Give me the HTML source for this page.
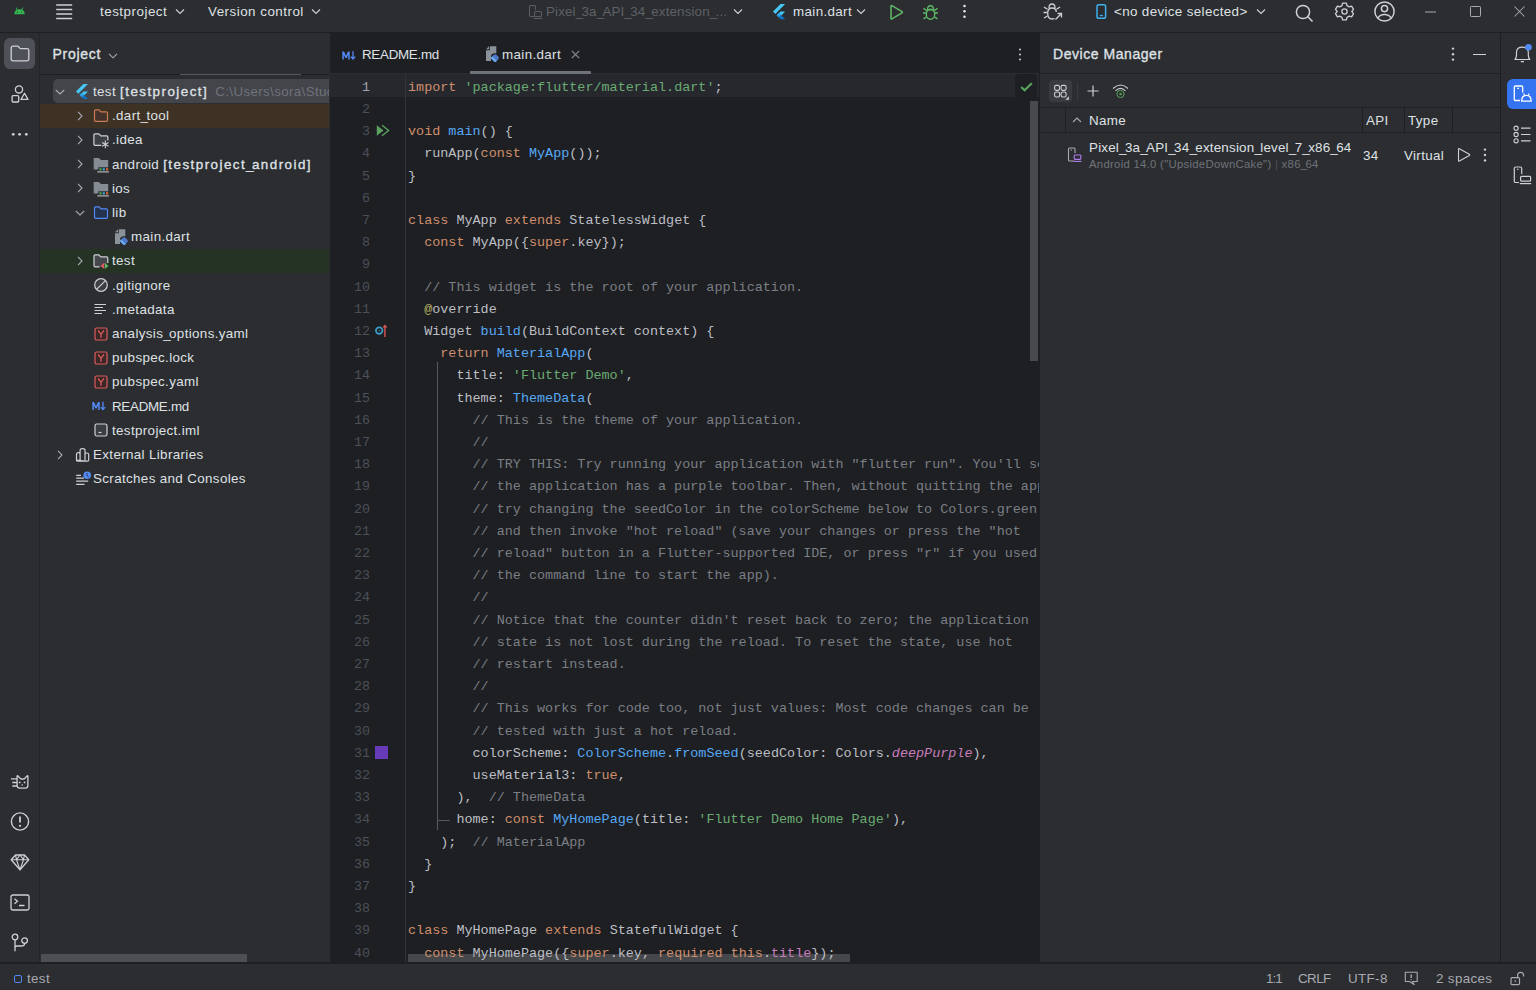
<!DOCTYPE html>
<html><head><meta charset="utf-8">
<style>
*{margin:0;padding:0;box-sizing:border-box}
html,body{width:1536px;height:990px;overflow:hidden;background:#2B2D30;font-family:"Liberation Sans",sans-serif;color:#DFE1E5}
.a{position:absolute}
.ui{font-size:13.4px;letter-spacing:0.35px;white-space:nowrap;line-height:18px}
.u{letter-spacing:-1.6px}
b{font-weight:normal;-webkit-text-stroke:0.35px #DFE1E5;letter-spacing:1.45px}
svg{position:absolute;overflow:visible}
#top{left:0;top:0;width:1536px;height:32px;background:#2B2D30}
#topline{left:0;top:32px;width:1536px;height:1px;background:#1E1F22}
#lstrip{left:0;top:33px;width:39px;height:929px;background:#2B2D30}
#lstripb{left:39px;top:33px;width:1px;height:929px;background:#242528;box-shadow:1px 0 0 #28292D}
#proj{left:40px;top:33px;width:290px;height:929px;background:#2B2D30;overflow:hidden}
#editor{left:330px;top:33px;width:710px;height:929px;background:#1E1F22;overflow:hidden}
#dm{left:1040px;top:33px;width:460px;height:929px;background:#2B2D30;overflow:hidden}
#rstrip{left:1500px;top:33px;width:36px;height:929px;background:#2B2D30}
#rstripb{left:1500px;top:33px;width:1px;height:929px;background:#1E1F22}
#status{left:0;top:962px;width:1536px;height:28px;background:#2B2D30}
#statusb{left:0;top:962px;width:1536px;height:2px;background:#1E1F22}
.code{font-family:"Liberation Mono",monospace;font-size:13.44px;white-space:pre;line-height:22.2px}
.ln{font-family:"Liberation Mono",monospace;font-size:13.333px;color:#4B5059;text-align:right;width:40px;line-height:22.2px}
.k{color:#CF8E6D}.s{color:#6AAB73}.c{color:#7A7E85}.f{color:#56A8F5}.an{color:#B3AE60}.p{color:#C77DBB}.t{color:#BCBEC4}
</style></head><body>
<div id="top" class="a"></div>
<div id="topline" class="a"></div>
<div id="lstrip" class="a"></div>
<div id="lstripb" class="a"></div>
<div id="proj" class="a"></div>
<div id="editor" class="a"></div>
<div id="dm" class="a"></div>
<div id="rstrip" class="a"></div>
<div id="rstripb" class="a"></div>
<div id="status" class="a"></div>
<div id="statusb" class="a"></div>

<!-- TOP BAR -->
<svg style="left:14px;top:7px" width="11" height="8" viewBox="0 0 11 8"><path d="M0.3 7.3Q0.3 2.3 5.5 2.3Q10.7 2.3 10.7 7.3Z" fill="#33B552"/><path d="M2.2 0.5L3.1 2.8M8.8 0.5L7.9 2.8" stroke="#33B552" stroke-width="1"/><circle cx="3.3" cy="5" r="0.55" fill="#2B2D30"/><circle cx="7.7" cy="5" r="0.55" fill="#2B2D30"/></svg>
<svg style="left:56px;top:4px" width="17" height="16" viewBox="0 0 17 16"><path d="M0.2 1H16.2M0.2 5.5H16.2M0.2 10H16.2M0.2 14.5H16.2" stroke="#CED0D6" stroke-width="1.3"/></svg>
<div class="a ui" style="left:100px;top:3px;letter-spacing:0.5px">testproject</div>
<svg style="left:175px;top:9px" width="10" height="6" viewBox="0 0 10 6"><path d="M1 0.5L5 4.5L9 0.5" stroke="#CED0D6" stroke-width="1.1" fill="none"/></svg>
<div class="a ui" style="left:208px;top:3px;letter-spacing:0.48px">Version control</div>
<svg style="left:311px;top:9px" width="10" height="6" viewBox="0 0 10 6"><path d="M1 0.5L5 4.5L9 0.5" stroke="#CED0D6" stroke-width="1.1" fill="none"/></svg>
<svg style="left:528px;top:4px" width="16" height="16" viewBox="0 0 16 16"><path d="M7.5 12.5H2.5Q1.5 12.5 1.5 11.5V2.5Q1.5 1.5 2.5 1.5H6.5Q7.5 1.5 7.5 2.5V6" stroke="#5A5D63" stroke-width="1.1" fill="none"/><rect x="6.5" y="7.5" width="7" height="5" rx="1" stroke="#5A5D63" stroke-width="1.1" fill="none"/><path d="M5.5 14.5H14.5" stroke="#5A5D63" stroke-width="1.1"/></svg>
<div class="a ui" style="left:546px;top:3px;color:#5E6167;letter-spacing:0.12px">Pixel<span class="u">_</span>3a<span class="u">_</span>API<span class="u">_</span>34<span class="u">_</span>extension<span class="u">_</span>...</div>
<svg style="left:733px;top:9px" width="10" height="6" viewBox="0 0 10 6"><path d="M1 0.5L5 4.5L9 0.5" stroke="#CED0D6" stroke-width="1.1" fill="none"/></svg>
<svg style="left:773px;top:3.5px" width="12.2" height="15.2" viewBox="9.8 10.4 146.4 181.2"><path fill="#48C6F5" d="M37.7 128.9L9.8 101 100.4 10.4h55.8z"/><path fill="#48C6F5" d="M156.2 101H100.4L79.5 121.9l27.9 27.9z"/><path fill="#1172C4" d="M79.6 170.7l20.9 20.9h55.8l-48.8-48.8z"/><path fill="#2AA4EC" d="M51.6 142.8l27.9-27.9 27.9 27.9-27.9 27.9z"/></svg>
<div class="a ui" style="left:793px;top:3px">main.dart</div>
<svg style="left:856px;top:9px" width="10" height="6" viewBox="0 0 10 6"><path d="M1 0.5L5 4.5L9 0.5" stroke="#CED0D6" stroke-width="1.1" fill="none"/></svg>
<svg style="left:889px;top:4px" width="15" height="17" viewBox="0 0 15 17"><path d="M2 2.2Q2 1.2 2.9 1.7L13 7.7Q13.8 8.3 13 8.9L2.9 14.9Q2 15.4 2 14.4Z" stroke="#5FB865" stroke-width="1.5" fill="none" stroke-linejoin="round"/></svg>
<svg style="left:922px;top:4px" width="17" height="17" viewBox="0 0 17 17"><ellipse cx="8.5" cy="10.3" rx="4.2" ry="5" stroke="#5FB865" stroke-width="1.4" fill="none"/><path d="M5.5 5.8Q5.5 1.8 8.5 1.8Q11.5 1.8 11.5 5.8Z" stroke="#5FB865" stroke-width="1.4" fill="none"/><path d="M1 9H4.5M12.5 9H16M1.5 4.2L4.6 6.6M15.5 4.2L12.4 6.6M1.5 14.8L4.7 12.8M15.5 14.8L12.3 12.8" stroke="#5FB865" stroke-width="1.4"/></svg>
<svg style="left:962px;top:4px" width="5" height="16" viewBox="0 0 5 16"><circle cx="2.5" cy="2" r="1.3" fill="#DFE1E5"/><circle cx="2.5" cy="7.3" r="1.3" fill="#DFE1E5"/><circle cx="2.5" cy="12.7" r="1.3" fill="#DFE1E5"/></svg>
<svg style="left:1043px;top:2px" width="20" height="19" viewBox="0 0 20 19"><path d="M6 6Q6 2 9 2Q12 2 12 6" stroke="#CED0D6" stroke-width="1.3" fill="none"/><path d="M11.5 16.5Q10.5 17 9 17Q4.7 17 4.7 11.2Q4.7 6 9 6Q13.3 6 13.3 10" stroke="#CED0D6" stroke-width="1.3" fill="none"/><path d="M0.5 10.5H4M1 5L4.5 7.3M1 16L4.5 14M13.5 7.3L17 5" stroke="#CED0D6" stroke-width="1.3"/><path d="M12.5 17.5L18.5 11.5M14.5 11.5H18.5V15.5" stroke="#CED0D6" stroke-width="1.3" fill="none"/></svg>
<svg style="left:1096px;top:4px" width="11" height="15" viewBox="0 0 11 15"><rect x="1" y="0.8" width="8.6" height="13.4" rx="1.8" stroke="#3DB0F0" stroke-width="1.5" fill="none"/><path d="M3.8 11.5H6.8" stroke="#3DB0F0" stroke-width="1.3"/></svg>
<div class="a ui" style="left:1114px;top:3px">&lt;no device selected&gt;</div>
<svg style="left:1256px;top:9px" width="10" height="6" viewBox="0 0 10 6"><path d="M1 0.5L5 4.5L9 0.5" stroke="#CED0D6" stroke-width="1.1" fill="none"/></svg>
<svg style="left:1295px;top:4px" width="19" height="19" viewBox="0 0 19 19"><circle cx="8" cy="8" r="6.6" stroke="#CED0D6" stroke-width="1.5" fill="none"/><path d="M12.8 12.8L17.5 17.5" stroke="#CED0D6" stroke-width="1.6"/></svg>
<svg style="left:1335px;top:2px" width="19" height="19" viewBox="0 0 19 19"><path d="M7.6 1.2H11.4L12 3.6L14.3 4.9L16.6 4.2L18.5 7.4L16.8 9.5L16.8 9.5L18.5 11.6L16.6 14.8L14.3 14.1L12 15.4L11.4 17.8H7.6L7 15.4L4.7 14.1L2.4 14.8L0.5 11.6L2.2 9.5L0.5 7.4L2.4 4.2L4.7 4.9L7 3.6Z" stroke="#CED0D6" stroke-width="1.3" fill="none" stroke-linejoin="round"/><circle cx="9.5" cy="9.5" r="2.6" stroke="#CED0D6" stroke-width="1.3" fill="none"/></svg>
<svg style="left:1374px;top:1px" width="21" height="21" viewBox="0 0 21 21"><circle cx="10.5" cy="10.5" r="9.6" stroke="#CED0D6" stroke-width="1.5" fill="none"/><circle cx="10.5" cy="7.6" r="3.1" stroke="#CED0D6" stroke-width="1.5" fill="none"/><path d="M3.8 17.2Q6 13.6 10.5 13.6Q15 13.6 17.2 17.2" stroke="#CED0D6" stroke-width="1.5" fill="none"/></svg>
<svg style="left:1425px;top:11px" width="11" height="2" viewBox="0 0 11 2"><path d="M0 1H11" stroke="#A8AAB0" stroke-width="1"/></svg>
<svg style="left:1470px;top:6px" width="11" height="11" viewBox="0 0 11 11"><rect x="0.5" y="0.5" width="10" height="10" rx="0.8" stroke="#A8AAB0" stroke-width="1" fill="none"/></svg>
<svg style="left:1514px;top:6px" width="11" height="11" viewBox="0 0 11 11"><path d="M0.5 0.5L10.5 10.5M10.5 0.5L0.5 10.5" stroke="#A8AAB0" stroke-width="1.05"/></svg>
<!-- LSTRIP -->
<div class="a" style="left:4px;top:38px;width:31px;height:31px;background:#4E5157;border-radius:6px"></div>
<svg style="left:10px;top:45px" width="20" height="17" viewBox="0 0 20 17"><path d="M1.2 3Q1.2 1.2 3 1.2H8L10.3 3.6H17Q18.8 3.6 18.8 5.4V14Q18.8 15.8 17 15.8H3Q1.2 15.8 1.2 14Z" stroke="#CED0D6" stroke-width="1.3" fill="none" stroke-linejoin="round"/></svg>
<svg style="left:11px;top:85px" width="18" height="18" viewBox="0 0 18 18"><circle cx="8" cy="4.4" r="3.6" stroke="#CED0D6" stroke-width="1.3" fill="none"/><rect x="1.1" y="10.6" width="6.6" height="6.4" rx="0.9" stroke="#CED0D6" stroke-width="1.3" fill="none"/><path d="M13.5 8.2L17 14.4H10Z" stroke="#CED0D6" stroke-width="1.3" fill="none" stroke-linejoin="round"/></svg>
<svg style="left:11px;top:132px" width="18" height="5" viewBox="0 0 18 5"><circle cx="2.2" cy="2.3" r="1.4" fill="#CED0D6"/><circle cx="8.6" cy="2.3" r="1.4" fill="#CED0D6"/><circle cx="15.3" cy="2.3" r="1.4" fill="#CED0D6"/></svg>
<svg style="left:10px;top:774px" width="20" height="16" viewBox="0 0 20 16"><path d="M7.1 2.2Q7.2 1.3 7.9 1.9L10.6 4.7Q12.5 5.6 14.4 4.7L17.1 1.9Q17.8 1.3 17.9 2.2V11.3Q17.9 14.2 15.2 14.2H9.8Q7.1 14.2 7.1 11.3Z" stroke="#CED0D6" stroke-width="1.3" fill="none" stroke-linejoin="round"/><path d="M1 4.9H7M2.3 8.5H7M2.3 12H7" stroke="#CED0D6" stroke-width="1.3"/><circle cx="9.7" cy="8.4" r="0.95" fill="#CED0D6"/><circle cx="14.6" cy="8.4" r="0.95" fill="#CED0D6"/><path d="M11.1 10.5H13.3L12.2 11.9Z" fill="#CED0D6"/></svg>
<svg style="left:10px;top:812px" width="20" height="20" viewBox="0 0 20 20"><circle cx="10" cy="9.5" r="8.6" stroke="#CED0D6" stroke-width="1.4" fill="none"/><path d="M10 4.5V10.5" stroke="#CED0D6" stroke-width="1.8"/><circle cx="10" cy="13.8" r="1.1" fill="#CED0D6"/></svg>
<svg style="left:10px;top:854px" width="20" height="17" viewBox="0 0 20 17"><path d="M5.5 1H14.5L18.8 5.7L10 15.8L1.2 5.7Z" stroke="#CED0D6" stroke-width="1.3" fill="none" stroke-linejoin="round"/><path d="M1.2 5.7H18.8M6.5 5.7L10 15.8L13.5 5.7M5.5 1L6.5 5.7L10 1L13.5 5.7L14.5 1" stroke="#CED0D6" stroke-width="1.1" fill="none" stroke-linejoin="round"/></svg>
<svg style="left:10px;top:894px" width="20" height="17" viewBox="0 0 20 17"><rect x="1" y="1" width="18" height="15" rx="1.8" stroke="#CED0D6" stroke-width="1.3" fill="none"/><path d="M4.5 4.8L7.5 7.3L4.5 9.8M9 11.5H14.5" stroke="#CED0D6" stroke-width="1.3" fill="none"/></svg>
<svg style="left:11px;top:933px" width="18" height="19" viewBox="0 0 18 19"><circle cx="4" cy="4" r="2.8" stroke="#CED0D6" stroke-width="1.3" fill="none"/><circle cx="13.6" cy="7.6" r="2.8" stroke="#CED0D6" stroke-width="1.3" fill="none"/><path d="M4 6.8V18.2M4 15Q4 13 6 13H10Q13.6 13 13.6 10.4" stroke="#CED0D6" stroke-width="1.3" fill="none"/></svg>
<div class="a" style="left:0;top:0;width:329px;height:962px;overflow:hidden">
<!-- PROJECT -->
<div class="a ui" style="left:52.5px;top:44.5px;font-size:14px;-webkit-text-stroke:0.35px #DFE1E5;letter-spacing:0.7px">Project</div>
<svg style="left:108px;top:52.6px" width="10" height="6" viewBox="0 0 10 6"><path d="M1 0.8L5 4.8L9 0.8" stroke="#A8AAB0" stroke-width="1.1" fill="none"/></svg>
<div class="a" style="left:40px;top:74px;width:290px;height:1px;background:#1E1F22"></div>
<div class="a" style="left:180px;top:74px;width:121px;height:1px;background:#55575C"></div>
<div class="a" style="left:53px;top:79px;width:290px;height:24px;background:#43454A;border-radius:5px"></div>
<div class="a" style="left:40px;top:103.6px;width:290px;height:24.2px;background:#3D3223"></div>
<div class="a" style="left:40px;top:248.8px;width:290px;height:24.2px;background:#253325"></div>
<svg style="left:55px;top:88.6px" width="10" height="6" viewBox="0 0 10 6"><path d="M0.8 1L5 5L9.2 1" stroke="#A8AAB0" stroke-width="1.1" fill="none"/></svg>
<svg style="left:76px;top:84.1px" width="12" height="15" viewBox="9.8 10.4 146.4 181.2"><path fill="#48C6F5" d="M37.7 128.9L9.8 101 100.4 10.4h55.8z"/><path fill="#48C6F5" d="M156.2 101H100.4L79.5 121.9l27.9 27.9z"/><path fill="#1172C4" d="M79.6 170.7l20.9 20.9h55.8l-48.8-48.8z"/><path fill="#2AA4EC" d="M51.6 142.8l27.9-27.9 27.9 27.9-27.9 27.9z"/></svg>
<div class="a ui" style="left:93px;top:83.0px;">test <b>[testproject]</b> <span style="color:#6F737A;margin-left:3px">C:\Users\sora\StudioProjects\testproject</span></div>
<svg style="left:77px;top:110.8px" width="6" height="10" viewBox="0 0 6 10"><path d="M1 0.8L5 5L1 9.2" stroke="#A8AAB0" stroke-width="1.1" fill="none"/></svg>
<svg style="left:93px;top:107.8px" width="16" height="16" viewBox="0 0 16 16"><path d="M1.5 3Q1.5 1.8 2.7 1.8H6L8 3.8H13.3Q14.5 3.8 14.5 5V12.2Q14.5 13.4 13.3 13.4H2.7Q1.5 13.4 1.5 12.2Z" stroke="#C77D55" stroke-width="1.2" fill="#45322A"/></svg>
<div class="a ui" style="left:112px;top:107.2px;">.dart<span class="u">_</span>tool</div>
<svg style="left:77px;top:135.0px" width="6" height="10" viewBox="0 0 6 10"><path d="M1 0.8L5 5L1 9.2" stroke="#A8AAB0" stroke-width="1.1" fill="none"/></svg>
<svg style="left:93px;top:132.0px" width="16" height="16" viewBox="0 0 16 16"><path d="M8.3 13.3H2.1Q0.9 13.3 0.9 12.1V3.1Q0.9 1.9 2.1 1.9H5.9L7.9 3.9H13.7Q14.9 3.9 14.9 5.1V8.6" stroke="#CED0D6" stroke-width="1.2" fill="#3C3F43"/><path d="M12.3 8.6V16.2M9.1 10.6L15.5 14.2M9.1 14.2L15.5 10.6" stroke="#CED0D6" stroke-width="1.1"/></svg>
<div class="a ui" style="left:112px;top:131.4px;">.idea</div>
<svg style="left:77px;top:159.2px" width="6" height="10" viewBox="0 0 6 10"><path d="M1 0.8L5 5L1 9.2" stroke="#A8AAB0" stroke-width="1.1" fill="none"/></svg>
<svg style="left:93px;top:156.2px" width="16" height="16" viewBox="0 0 16 16"><path d="M0.7 2.1H5.9L7.9 4H15.2V11.3H5.3V13.4H0.7Z" fill="#868C94"/><rect x="6.4" y="12.3" width="2.2" height="2.1" fill="#4BAF4F"/><rect x="9.7" y="12.3" width="2.2" height="2.1" fill="#3DA8D8"/><rect x="13" y="12.3" width="2.2" height="2.1" fill="#E56A2C"/><path d="M4.3 15.9H16" stroke="#CED0D6" stroke-width="1"/></svg>
<div class="a ui" style="left:112px;top:155.6px;">android <b>[testproject<span class="u">_</span>android]</b></div>
<svg style="left:77px;top:183.4px" width="6" height="10" viewBox="0 0 6 10"><path d="M1 0.8L5 5L1 9.2" stroke="#A8AAB0" stroke-width="1.1" fill="none"/></svg>
<svg style="left:93px;top:180.4px" width="16" height="16" viewBox="0 0 16 16"><path d="M0.7 2.1H5.9L7.9 4H15.2V11.3H5.3V13.4H0.7Z" fill="#868C94"/><rect x="6.4" y="12.3" width="2.2" height="2.1" fill="#4BAF4F"/><rect x="9.7" y="12.3" width="2.2" height="2.1" fill="#3DA8D8"/><rect x="13" y="12.3" width="2.2" height="2.1" fill="#E56A2C"/><path d="M4.3 15.9H16" stroke="#CED0D6" stroke-width="1"/></svg>
<div class="a ui" style="left:112px;top:179.8px;">ios</div>
<svg style="left:75px;top:209.6px" width="10" height="6" viewBox="0 0 10 6"><path d="M0.8 1L5 5L9.2 1" stroke="#A8AAB0" stroke-width="1.1" fill="none"/></svg>
<svg style="left:93px;top:204.6px" width="16" height="16" viewBox="0 0 16 16"><path d="M1.5 3Q1.5 1.8 2.7 1.8H6L8 3.8H13.3Q14.5 3.8 14.5 5V12.2Q14.5 13.4 13.3 13.4H2.7Q1.5 13.4 1.5 12.2Z" stroke="#548AF7" stroke-width="1.2" fill="#25324D"/></svg>
<div class="a ui" style="left:112px;top:204.0px;">lib</div>
<svg style="left:113px;top:228.8px" width="16" height="16" viewBox="0 0 16 16"><path d="M5.8 0.3H12.3V7.2H10.6Q7 7.2 7 10.8V15.1H2V4.3H5.8Z" fill="#8A9199"/><path d="M2 3.3L5 0.3V3.3Z" fill="#8A9199"/><rect x="8" y="8.8" width="6.3" height="6.3" rx="1.8" transform="rotate(45 11.15 11.95)" fill="#4F78C8"/><path d="M8.2 10.3L12.8 14.9L11.9 15.8Q11.15 16.5 10.4 15.8L7.3 12.7Q6.6 11.95 7.3 11.2Z" fill="#6AAAF0"/></svg>
<div class="a ui" style="left:131px;top:228.2px;">main.dart</div>
<svg style="left:77px;top:256.0px" width="6" height="10" viewBox="0 0 6 10"><path d="M1 0.8L5 5L1 9.2" stroke="#A8AAB0" stroke-width="1.1" fill="none"/></svg>
<svg style="left:93px;top:253.0px" width="16" height="16" viewBox="0 0 16 16"><path d="M6.6 13.9H2.2Q1 13.9 1 12.7V3Q1 1.8 2.2 1.8H5.8L7.8 3.8H13.6Q14.8 3.8 14.8 5V10.1" stroke="#CED0D6" stroke-width="1.2" fill="#45474C"/><path d="M11.2 9.8L7.4 13L11.2 16.1Z" fill="#E55765"/><path d="M11.8 9.8L15.5 13L11.8 16.1Z" fill="#5FB865"/></svg>
<div class="a ui" style="left:112px;top:252.4px;">test</div>
<svg style="left:93px;top:277.2px" width="16" height="16" viewBox="0 0 16 16"><circle cx="8" cy="8" r="6.3" stroke="#CED0D6" stroke-width="1.2" fill="#3C3F41"/><path d="M3.8 12.2L12.2 3.8" stroke="#CED0D6" stroke-width="1.2"/></svg>
<div class="a ui" style="left:112px;top:276.6px;">.gitignore</div>
<svg style="left:93px;top:301.4px" width="16" height="16" viewBox="0 0 16 16"><path d="M1.5 3.5H13M1.5 6.5H10M1.5 9.5H13M1.5 12.5H9" stroke="#CED0D6" stroke-width="1.1"/></svg>
<div class="a ui" style="left:112px;top:300.8px;">.metadata</div>
<svg style="left:93px;top:325.6px" width="16" height="16" viewBox="0 0 16 16"><rect x="2" y="2" width="12" height="12" rx="1.5" stroke="#DB5C5C" stroke-width="1.2" fill="#3A2728"/><path d="M5 4.5L8 8.3L11 4.5M8 8.3V11.8" stroke="#DB5C5C" stroke-width="1.3" fill="none"/></svg>
<div class="a ui" style="left:112px;top:325.0px;">analysis<span class="u">_</span>options.yaml</div>
<svg style="left:93px;top:349.8px" width="16" height="16" viewBox="0 0 16 16"><rect x="2" y="2" width="12" height="12" rx="1.5" stroke="#DB5C5C" stroke-width="1.2" fill="#3A2728"/><path d="M5 4.5L8 8.3L11 4.5M8 8.3V11.8" stroke="#DB5C5C" stroke-width="1.3" fill="none"/></svg>
<div class="a ui" style="left:112px;top:349.2px;">pubspec.lock</div>
<svg style="left:93px;top:374.0px" width="16" height="16" viewBox="0 0 16 16"><rect x="2" y="2" width="12" height="12" rx="1.5" stroke="#DB5C5C" stroke-width="1.2" fill="#3A2728"/><path d="M5 4.5L8 8.3L11 4.5M8 8.3V11.8" stroke="#DB5C5C" stroke-width="1.3" fill="none"/></svg>
<div class="a ui" style="left:112px;top:373.4px;">pubspec.yaml</div>
<svg style="left:92px;top:398.2px" width="16" height="16" viewBox="0 0 16 16"><path d="M0.3 12.1V4.1H2L4 8.3L6 4.1H7.7V12.1H6.2V7.3L4.6 10.6H3.4L1.8 7.3V12.1Z" fill="#548AF7"/><path d="M11 3.8V11.3M8.8 9.1L11 11.5L13.2 9.1" stroke="#548AF7" stroke-width="1.3" fill="none"/></svg>
<div class="a ui" style="left:112px;top:397.6px;;letter-spacing:-0.3px">README.md</div>
<svg style="left:93px;top:422.4px" width="16" height="16" viewBox="0 0 16 16"><rect x="2" y="2" width="12" height="12" rx="1.8" stroke="#CED0D6" stroke-width="1.2" fill="#3C3F41"/><path d="M5.5 10.5H8.5" stroke="#CED0D6" stroke-width="1.2"/></svg>
<div class="a ui" style="left:112px;top:421.8px;">testproject.iml</div>
<svg style="left:57px;top:449.6px" width="6" height="10" viewBox="0 0 6 10"><path d="M1 0.8L5 5L1 9.2" stroke="#A8AAB0" stroke-width="1.1" fill="none"/></svg>
<svg style="left:75px;top:446.6px" width="16" height="16" viewBox="0 0 16 16"><path d="M1.5 14.2V7.3Q1.5 5.6 3.3 5.6Q5.1 5.6 5.1 7.3V14.2M5.1 14.2V3.3Q5.1 1.6 7.6 1.6Q10 1.6 10 3.3V14.2M10 14.2V7.6Q10 6 11.8 6Q13.7 6 13.7 7.6V13Q13.7 14.2 12.5 14.2H2.7Q1.5 14.2 1.5 13Z" stroke="#CED0D6" stroke-width="1.2" fill="none" stroke-linejoin="round"/></svg>
<div class="a ui" style="left:93px;top:446.0px;">External Libraries</div>
<svg style="left:75px;top:470.8px" width="16" height="16" viewBox="0 0 16 16"><path d="M1.2 4.3H6M1.2 7.1H9M1.2 10.1H13.2M1.2 13.3H9.5" stroke="#CED0D6" stroke-width="1.2"/><circle cx="12.2" cy="4.2" r="3.8" fill="#548AF7"/><path d="M12 2V4.5L13.6 6.2" stroke="#2B2D30" stroke-width="0.9" fill="none"/></svg>
<div class="a ui" style="left:93px;top:470.2px;">Scratches and Consoles</div>
<div class="a" style="left:41px;top:954px;width:206px;height:8px;background:#4D4F53"></div>
</div>
<!-- EDITOR -->
<div class="a" style="left:330px;top:33px;width:709px;height:929px;overflow:hidden">
<div class="a" style="left:0;top:40px;width:710px;height:1px;background:#2B2D30"></div>
<svg style="left:12px;top:18px" width="14" height="9" viewBox="0 0 14 9"><path d="M0.3 8.6V0.6H2L4 4.8L6 0.6H7.7V8.6H6.2V3.8L4.6 7.1H3.4L1.8 3.8V8.6Z" fill="#548AF7"/><path d="M11 0.3V7.8M8.8 5.6L11 8L13.2 5.6" stroke="#548AF7" stroke-width="1.3" fill="none"/></svg>
<div class="a ui" style="left:32px;top:13px;letter-spacing:-0.3px">README.md</div>
<svg style="left:154px;top:13px" width="16" height="16" viewBox="0 0 16 16"><path d="M5.8 0.3H12.3V7.2H10.6Q7 7.2 7 10.8V15.1H2V4.3H5.8Z" fill="#8A9199"/><path d="M2 3.3L5 0.3V3.3Z" fill="#8A9199"/><rect x="8" y="8.8" width="6.3" height="6.3" rx="1.8" transform="rotate(45 11.15 11.95)" fill="#4F78C8"/><path d="M8.2 10.3L12.8 14.9L11.9 15.8Q11.15 16.5 10.4 15.8L7.3 12.7Q6.6 11.95 7.3 11.2Z" fill="#6AAAF0"/></svg>
<div class="a ui" style="left:172px;top:13px">main.dart</div>
<svg style="left:241px;top:17px" width="9" height="9" viewBox="0 0 9 9"><path d="M0.8 0.8L8.2 8.2M8.2 0.8L0.8 8.2" stroke="#8C8F94" stroke-width="1.1"/></svg>
<div class="a" style="left:140px;top:38px;width:121px;height:3px;background:#6F737A;border-radius:1px"></div>
<svg style="left:688px;top:15px" width="4" height="13" viewBox="0 0 4 13"><circle cx="2" cy="1.5" r="1" fill="#CED0D6"/><circle cx="2" cy="6.5" r="1" fill="#CED0D6"/><circle cx="2" cy="11.5" r="1" fill="#CED0D6"/></svg>
<div class="a" style="left:0;top:41px;width:710px;height:23px;background:#26282E"></div>
<div class="a" style="left:75px;top:41px;width:1px;height:900px;background:#313438"></div>
<div class="a" style="left:78px;top:921px;width:442px;height:8px;background:#45474B"></div>
<div class="a ln" style="left:0px;top:43.7px;color:#A1A3AB">1</div>
<div class="a ln" style="left:0px;top:65.9px;color:#4B5059">2</div>
<div class="a ln" style="left:0px;top:88.1px;color:#4B5059">3</div>
<div class="a ln" style="left:0px;top:110.3px;color:#4B5059">4</div>
<div class="a ln" style="left:0px;top:132.5px;color:#4B5059">5</div>
<div class="a ln" style="left:0px;top:154.7px;color:#4B5059">6</div>
<div class="a ln" style="left:0px;top:176.9px;color:#4B5059">7</div>
<div class="a ln" style="left:0px;top:199.1px;color:#4B5059">8</div>
<div class="a ln" style="left:0px;top:221.3px;color:#4B5059">9</div>
<div class="a ln" style="left:0px;top:243.5px;color:#4B5059">10</div>
<div class="a ln" style="left:0px;top:265.7px;color:#4B5059">11</div>
<div class="a ln" style="left:0px;top:287.9px;color:#4B5059">12</div>
<div class="a ln" style="left:0px;top:310.1px;color:#4B5059">13</div>
<div class="a ln" style="left:0px;top:332.3px;color:#4B5059">14</div>
<div class="a ln" style="left:0px;top:354.5px;color:#4B5059">15</div>
<div class="a ln" style="left:0px;top:376.7px;color:#4B5059">16</div>
<div class="a ln" style="left:0px;top:398.9px;color:#4B5059">17</div>
<div class="a ln" style="left:0px;top:421.1px;color:#4B5059">18</div>
<div class="a ln" style="left:0px;top:443.3px;color:#4B5059">19</div>
<div class="a ln" style="left:0px;top:465.5px;color:#4B5059">20</div>
<div class="a ln" style="left:0px;top:487.7px;color:#4B5059">21</div>
<div class="a ln" style="left:0px;top:509.9px;color:#4B5059">22</div>
<div class="a ln" style="left:0px;top:532.1px;color:#4B5059">23</div>
<div class="a ln" style="left:0px;top:554.3px;color:#4B5059">24</div>
<div class="a ln" style="left:0px;top:576.5px;color:#4B5059">25</div>
<div class="a ln" style="left:0px;top:598.7px;color:#4B5059">26</div>
<div class="a ln" style="left:0px;top:620.9px;color:#4B5059">27</div>
<div class="a ln" style="left:0px;top:643.1px;color:#4B5059">28</div>
<div class="a ln" style="left:0px;top:665.3px;color:#4B5059">29</div>
<div class="a ln" style="left:0px;top:687.5px;color:#4B5059">30</div>
<div class="a ln" style="left:0px;top:709.7px;color:#4B5059">31</div>
<div class="a ln" style="left:0px;top:731.9px;color:#4B5059">32</div>
<div class="a ln" style="left:0px;top:754.1px;color:#4B5059">33</div>
<div class="a ln" style="left:0px;top:776.3px;color:#4B5059">34</div>
<div class="a ln" style="left:0px;top:798.5px;color:#4B5059">35</div>
<div class="a ln" style="left:0px;top:820.7px;color:#4B5059">36</div>
<div class="a ln" style="left:0px;top:842.9px;color:#4B5059">37</div>
<div class="a ln" style="left:0px;top:865.1px;color:#4B5059">38</div>
<div class="a ln" style="left:0px;top:887.3px;color:#4B5059">39</div>
<div class="a ln" style="left:0px;top:909.5px;color:#4B5059">40</div>
<div class="a code t" style="left:78px;top:43.7px"><span class="k">import</span> <span class="s">'package:flutter/material.dart'</span>;</div>
<div class="a code t" style="left:78px;top:65.9px"></div>
<div class="a code t" style="left:78px;top:88.1px"><span class="k">void</span> <span class="f">main</span>() {</div>
<div class="a code t" style="left:78px;top:110.3px">  runApp(<span class="k">const</span> <span class="f">MyApp</span>());</div>
<div class="a code t" style="left:78px;top:132.5px">}</div>
<div class="a code t" style="left:78px;top:154.7px"></div>
<div class="a code t" style="left:78px;top:176.9px"><span class="k">class</span> MyApp <span class="k">extends</span> StatelessWidget {</div>
<div class="a code t" style="left:78px;top:199.1px">  <span class="k">const</span> MyApp({<span class="k">super</span>.key});</div>
<div class="a code t" style="left:78px;top:221.3px"></div>
<div class="a code t" style="left:78px;top:243.5px"><span class="c">  // This widget is the root of your application.</span></div>
<div class="a code t" style="left:78px;top:265.7px">  <span class="an">@</span>override</div>
<div class="a code t" style="left:78px;top:287.9px">  Widget <span class="f">build</span>(BuildContext context) {</div>
<div class="a code t" style="left:78px;top:310.1px">    <span class="k">return</span> <span class="f">MaterialApp</span>(</div>
<div class="a code t" style="left:78px;top:332.3px">      title: <span class="s">'Flutter Demo'</span>,</div>
<div class="a code t" style="left:78px;top:354.5px">      theme: <span class="f">ThemeData</span>(</div>
<div class="a code t" style="left:78px;top:376.7px"><span class="c">        // This is the theme of your application.</span></div>
<div class="a code t" style="left:78px;top:398.9px"><span class="c">        //</span></div>
<div class="a code t" style="left:78px;top:421.1px"><span class="c">        // TRY THIS: Try running your application with "flutter run". You'll see</span></div>
<div class="a code t" style="left:78px;top:443.3px"><span class="c">        // the application has a purple toolbar. Then, without quitting the app,</span></div>
<div class="a code t" style="left:78px;top:465.5px"><span class="c">        // try changing the seedColor in the colorScheme below to Colors.green</span></div>
<div class="a code t" style="left:78px;top:487.7px"><span class="c">        // and then invoke "hot reload" (save your changes or press the "hot</span></div>
<div class="a code t" style="left:78px;top:509.9px"><span class="c">        // reload" button in a Flutter-supported IDE, or press "r" if you used</span></div>
<div class="a code t" style="left:78px;top:532.1px"><span class="c">        // the command line to start the app).</span></div>
<div class="a code t" style="left:78px;top:554.3px"><span class="c">        //</span></div>
<div class="a code t" style="left:78px;top:576.5px"><span class="c">        // Notice that the counter didn't reset back to zero; the application</span></div>
<div class="a code t" style="left:78px;top:598.7px"><span class="c">        // state is not lost during the reload. To reset the state, use hot</span></div>
<div class="a code t" style="left:78px;top:620.9px"><span class="c">        // restart instead.</span></div>
<div class="a code t" style="left:78px;top:643.1px"><span class="c">        //</span></div>
<div class="a code t" style="left:78px;top:665.3px"><span class="c">        // This works for code too, not just values: Most code changes can be</span></div>
<div class="a code t" style="left:78px;top:687.5px"><span class="c">        // tested with just a hot reload.</span></div>
<div class="a code t" style="left:78px;top:709.7px">        colorScheme: <span class="f">ColorScheme</span>.<span class="f">fromSeed</span>(seedColor: Colors.<span class="p" style="font-style:italic">deepPurple</span>),</div>
<div class="a code t" style="left:78px;top:731.9px">        useMaterial3: <span class="k">true</span>,</div>
<div class="a code t" style="left:78px;top:754.1px">      ),  <span class="c">// ThemeData</span></div>
<div class="a code t" style="left:78px;top:776.3px">      home: <span class="k">const</span> <span class="f">MyHomePage</span>(title: <span class="s">'Flutter Demo Home Page'</span>),</div>
<div class="a code t" style="left:78px;top:798.5px">    );  <span class="c">// MaterialApp</span></div>
<div class="a code t" style="left:78px;top:820.7px">  }</div>
<div class="a code t" style="left:78px;top:842.9px">}</div>
<div class="a code t" style="left:78px;top:865.1px"></div>
<div class="a code t" style="left:78px;top:887.3px"><span class="k">class</span> MyHomePage <span class="k">extends</span> StatefulWidget {</div>
<div class="a code t" style="left:78px;top:909.5px">  <span class="k">const</span> MyHomePage({<span class="k">super</span>.key, <span class="k">required</span> <span class="k">this</span>.<span class="p">title</span>});</div>
<div class="a" style="left:107px;top:329.3px;width:1px;height:468px;background:#55585E"></div>
<div class="a" style="left:107px;top:787.3px;width:13px;height:1px;background:#55585E"></div>
<svg style="left:46px;top:91px" width="14" height="13" viewBox="0 0 14 13"><path d="M0.8 1.3L7.5 6.5L0.8 11.7Z" fill="#5AA15F"/><path d="M6 1.3L12.6 6.5L6 11.7" stroke="#5AA15F" stroke-width="1.4" fill="none"/></svg>
<svg style="left:44px;top:291px" width="15" height="14" viewBox="0 0 15 14"><circle cx="5.2" cy="6.6" r="3.3" stroke="#3B9FCA" stroke-width="1.7" fill="none"/><circle cx="5.2" cy="6.6" r="0.7" fill="#3B9FCA"/><path d="M10.9 12.9V3" stroke="#C54C4C" stroke-width="1.6"/><path d="M8.3 3.6L10.9 0.6L13.5 3.6Z" fill="#D45A57"/></svg>
<div class="a" style="left:45px;top:712.5px;width:13px;height:13px;background:#673AB7"></div>
<div class="a" style="left:685px;top:41px;width:22px;height:23px;background:#1E1F22;border-radius:4px 4px 0 0"></div>
<svg style="left:690px;top:49px" width="13" height="10" viewBox="0 0 13 10"><path d="M1.2 5L4.6 8.3L11.8 1.2" stroke="#57A45D" stroke-width="2.1" fill="none"/></svg>
<div class="a" style="left:700px;top:68px;width:8px;height:260px;background:#48494C"></div>
</div>
<!-- DM -->
<div class="a" style="left:1039px;top:33px;width:1px;height:929px;background:#1E1F22"></div>
<div class="a ui" style="left:1053px;top:44.5px;font-size:14px;-webkit-text-stroke:0.35px #DFE1E5;letter-spacing:0.55px">Device Manager</div>
<svg style="left:1451px;top:47px" width="4" height="14" viewBox="0 0 4 14"><circle cx="2" cy="1.6" r="1.2" fill="#CED0D6"/><circle cx="2" cy="7.3" r="1.2" fill="#CED0D6"/><circle cx="2" cy="12.6" r="1.2" fill="#CED0D6"/></svg>
<div class="a" style="left:1473px;top:53.5px;width:13px;height:1.3px;background:#CED0D6"></div>
<div class="a" style="left:1041px;top:73px;width:459px;height:1px;background:#1E1F22"></div>
<div class="a" style="left:1049px;top:80px;width:23px;height:22px;background:#393B40;border-radius:4px"></div>
<svg style="left:1053px;top:85px" width="17" height="15" viewBox="0 0 17 15"><rect x="1.6" y="0.4" width="5" height="5" rx="1.6" stroke="#CED0D6" stroke-width="1.1" fill="none"/><rect x="8.1" y="0.4" width="5" height="5" rx="1.6" stroke="#CED0D6" stroke-width="1.1" fill="none"/><rect x="1.6" y="7" width="5" height="5" rx="1.6" stroke="#CED0D6" stroke-width="1.1" fill="none"/><rect x="8.1" y="7" width="5" height="5" rx="1.6" stroke="#CED0D6" stroke-width="1.1" fill="none"/><path d="M15.9 11.2V14.8H12.3Z" fill="#CED0D6"/></svg>
<div class="a" style="left:1077px;top:82px;width:1px;height:19px;background:#393B40"></div>
<svg style="left:1087px;top:85px" width="12" height="12" viewBox="0 0 12 12"><path d="M6 0.5V11.5M0.5 6H11.5" stroke="#CED0D6" stroke-width="1.2"/></svg>
<svg style="left:1112px;top:83px" width="17" height="16" viewBox="0 0 17 16"><path d="M1 5.5Q8.5 -1.5 16 5.5" stroke="#CED0D6" stroke-width="1.1" fill="none"/><path d="M3.5 7.8Q8.5 3 13.5 7.8" stroke="#CED0D6" stroke-width="1.1" fill="none"/><circle cx="8.5" cy="11" r="3.6" stroke="#57A45D" stroke-width="1" fill="none"/><circle cx="8.5" cy="11" r="1.2" fill="#57A45D"/></svg>
<div class="a" style="left:1041px;top:107px;width:459px;height:1px;background:#1E1F22"></div>
<div class="a" style="left:1065px;top:108px;width:1px;height:24px;background:#1E1F22"></div>
<div class="a" style="left:1362px;top:108px;width:1px;height:24px;background:#1E1F22"></div>
<div class="a" style="left:1404px;top:108px;width:1px;height:24px;background:#1E1F22"></div>
<div class="a" style="left:1452px;top:108px;width:1px;height:24px;background:#1E1F22"></div>
<div class="a" style="left:1041px;top:132px;width:459px;height:1px;background:#1E1F22"></div>
<svg style="left:1072px;top:117px" width="10" height="6" viewBox="0 0 10 6"><path d="M1 5L5 1L9 5" stroke="#A8AAB0" stroke-width="1.1" fill="none"/></svg>
<div class="a ui" style="left:1089px;top:112px">Name</div>
<div class="a ui" style="left:1366px;top:112px">API</div>
<div class="a ui" style="left:1408px;top:112px">Type</div>
<svg style="left:1067px;top:147px" width="15" height="16" viewBox="0 0 15 16"><path d="M7 14H2.6Q1.5 14 1.5 12.9V2.1Q1.5 1 2.6 1H6.9Q8 1 8 2.1V6" stroke="#A8AAB0" stroke-width="1.1" fill="none"/><path d="M3.6 3H5" stroke="#A8AAB0" stroke-width="1"/><rect x="7.2" y="8" width="6.6" height="4.4" rx="0.8" stroke="#B07DF0" stroke-width="1.1" fill="none"/><path d="M6.5 14.4H14.4" stroke="#B07DF0" stroke-width="1.1"/></svg>
<div class="a ui" style="left:1089px;top:139px;letter-spacing:0.2px">Pixel<span class="u">_</span>3a<span class="u">_</span>API<span class="u">_</span>34<span class="u">_</span>extension<span class="u">_</span>level<span class="u">_</span>7<span class="u">_</span>x86<span class="u">_</span>64</div>
<div class="a ui" style="left:1089px;top:157.5px;font-size:11.3px;letter-spacing:0.3px;color:#6F737A;line-height:13px">Android 14.0 ("UpsideDownCake") <span style="color:#4E5157">|</span> x86<span class="u">_</span>64</div>
<div class="a ui" style="left:1363px;top:147px">34</div>
<div class="a ui" style="left:1404px;top:147px">Virtual</div>
<svg style="left:1457px;top:147px" width="14" height="16" viewBox="0 0 14 16"><path d="M1.5 2.2Q1.5 1.2 2.4 1.7L12.3 7.3Q13.1 7.9 12.3 8.5L2.4 14.1Q1.5 14.6 1.5 13.6Z" stroke="#CED0D6" stroke-width="1.1" fill="none" stroke-linejoin="round"/></svg>
<svg style="left:1483px;top:148px" width="4" height="14" viewBox="0 0 4 14"><circle cx="2" cy="1.6" r="1.2" fill="#CED0D6"/><circle cx="2" cy="7" r="1.2" fill="#CED0D6"/><circle cx="2" cy="12.4" r="1.2" fill="#CED0D6"/></svg>
<!-- RSTRIP -->
<svg style="left:1513px;top:44px" width="20" height="20" viewBox="0 0 20 20"><path d="M2 15.5H16.8Q15.3 13.8 15.3 11V8.2Q15.3 3.2 9.4 3.2Q3.5 3.2 3.5 8.2V11Q3.5 13.8 2 15.5Z" stroke="#CED0D6" stroke-width="1.2" fill="none" stroke-linejoin="round"/><path d="M7.8 17.6H11" stroke="#CED0D6" stroke-width="1.3"/><circle cx="15.5" cy="3.3" r="3.3" fill="#548AF7"/></svg>
<div class="a" style="left:1507px;top:79px;width:36px;height:30px;background:#3574F0;border-radius:6px"></div>
<svg style="left:1513px;top:85px" width="19" height="18" viewBox="0 0 19 18"><path d="M7 15.5H2.6Q1.3 15.5 1.3 14.2V2.3Q1.3 1 2.6 1H8.4Q9.7 1 9.7 2.3V7.5" stroke="#FFFFFF" stroke-width="1.3" fill="none"/><path d="M4.3 3.3H6" stroke="#FFFFFF" stroke-width="1.2"/><path d="M8.6 16.2Q8.6 10.4 13.4 10.4Q18.2 10.4 18.2 16.2Z" stroke="#FFFFFF" stroke-width="1.3" fill="none" stroke-linejoin="round"/><path d="M10.6 8.4L11.6 10.4M16.2 8.4L15.2 10.4" stroke="#FFFFFF" stroke-width="1.1"/></svg>
<svg style="left:1513px;top:125px" width="19" height="19" viewBox="0 0 19 19"><circle cx="3.1" cy="3.2" r="2.1" stroke="#CED0D6" stroke-width="1.1" fill="none"/><circle cx="3.1" cy="9.5" r="2.1" stroke="#CED0D6" stroke-width="1.1" fill="none"/><circle cx="3.1" cy="15.8" r="2.1" stroke="#CED0D6" stroke-width="1.1" fill="none"/><path d="M8 3.2H17.5M8 9.5H17.5M8 15.8H17.5" stroke="#CED0D6" stroke-width="1.2"/></svg>
<svg style="left:1513px;top:166px" width="19" height="19" viewBox="0 0 19 19"><path d="M6 16.5H2.6Q1.3 16.5 1.3 15.2V2.3Q1.3 1 2.6 1H7.4Q8.7 1 8.7 2.3V8" stroke="#CED0D6" stroke-width="1.2" fill="none"/><path d="M4 3.3H5.6" stroke="#CED0D6" stroke-width="1.1"/><rect x="7.6" y="10.3" width="10" height="4.8" rx="0.9" stroke="#CED0D6" stroke-width="1.2" fill="none"/><path d="M6.8 17.6H18.2" stroke="#CED0D6" stroke-width="1.2"/></svg>
<!-- STATUS -->
<div class="a" style="left:14px;top:975px;width:8px;height:8px;border:1.4px solid #548AF7;border-radius:2px"></div>
<div class="a ui" style="left:27px;top:970px;color:#A8AAB0">test</div>
<div class="a ui" style="left:1266px;top:970px;color:#A8AAB0;letter-spacing:-0.9px">1:1</div>
<div class="a ui" style="left:1298px;top:970px;color:#A8AAB0;letter-spacing:-0.6px">CRLF</div>
<div class="a ui" style="left:1348px;top:970px;color:#A8AAB0">UTF-8</div>
<svg style="left:1404px;top:971px" width="15" height="15" viewBox="0 0 15 15"><path d="M1.3 1.3H13.2V10.5H8.3L10.2 13.6L5.5 10.5H1.3Z" stroke="#A8AAB0" stroke-width="1.1" fill="none" stroke-linejoin="round"/><path d="M7.2 3.5V7" stroke="#A8AAB0" stroke-width="1.4"/><circle cx="7.2" cy="8.6" r="0.7" fill="#A8AAB0"/></svg>
<div class="a ui" style="left:1436px;top:970px;color:#A8AAB0">2 spaces</div>
<svg style="left:1510px;top:971px" width="15" height="15" viewBox="0 0 15 15"><rect x="1" y="6.6" width="8.5" height="7" rx="1.2" stroke="#A8AAB0" stroke-width="1.2" fill="none"/><path d="M7.6 6.6V4.3Q7.6 1.3 10.6 1.3Q13.6 1.3 13.6 4.3V5.5" stroke="#A8AAB0" stroke-width="1.2" fill="none"/><path d="M5.25 9.2V11" stroke="#A8AAB0" stroke-width="1.2"/></svg>
</body></html>
